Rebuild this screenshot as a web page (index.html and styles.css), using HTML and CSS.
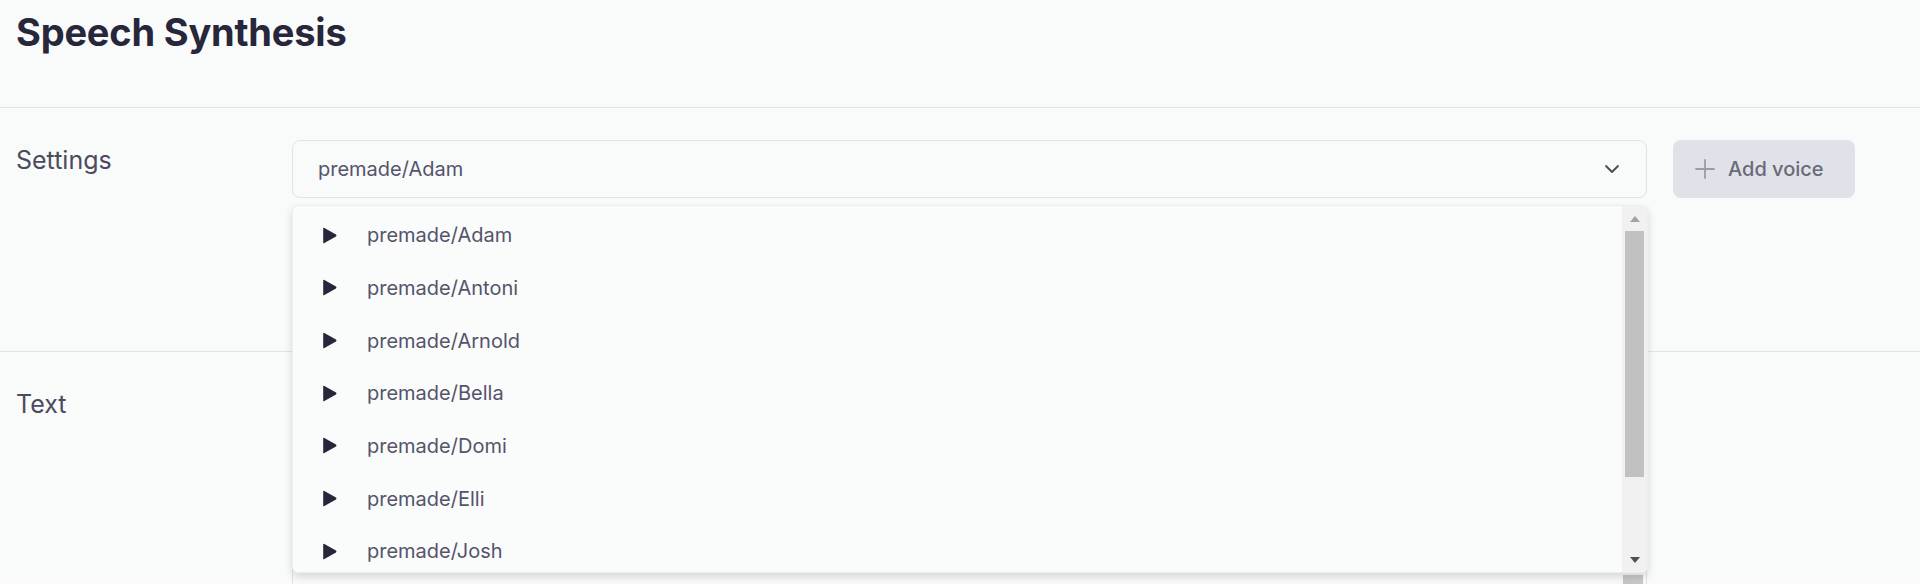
FILE: index.html
```html
<!DOCTYPE html>
<html lang="en">
<head>
<meta charset="utf-8">
<title>Speech Synthesis</title>
<link rel="stylesheet" href="styles.css">
</head>
<body>
  <header class="page-header">
    <h1 class="title">Speech Synthesis</h1>
  </header>

  <section class="row row-settings">
    <div class="label">Settings</div>
    <div class="controls">
      <div class="select-wrap">
        <div class="select">
          <span class="select-value">premade/Adam</span>
          <svg class="chevron" width="16" height="10" viewBox="0 0 16 10"><path d="M2 2 L8 8 L14 2" fill="none" stroke="#4a4a55" stroke-width="1.8" stroke-linecap="round" stroke-linejoin="round"/></svg>
        </div>
        <div class="dropdown">
          <ul class="options">
            <li class="option"><svg class="play" width="15" height="17" viewBox="0 0 15 17"><path d="M1.2 1.6 Q1.2 0.3 2.4 1 L14 7.6 Q15 8.5 14 9.4 L2.4 16 Q1.2 16.7 1.2 15.4 Z" fill="#27263b"/></svg><span>premade/Adam</span></li>
            <li class="option"><svg class="play" width="15" height="17" viewBox="0 0 15 17"><path d="M1.2 1.6 Q1.2 0.3 2.4 1 L14 7.6 Q15 8.5 14 9.4 L2.4 16 Q1.2 16.7 1.2 15.4 Z" fill="#27263b"/></svg><span>premade/Antoni</span></li>
            <li class="option"><svg class="play" width="15" height="17" viewBox="0 0 15 17"><path d="M1.2 1.6 Q1.2 0.3 2.4 1 L14 7.6 Q15 8.5 14 9.4 L2.4 16 Q1.2 16.7 1.2 15.4 Z" fill="#27263b"/></svg><span>premade/Arnold</span></li>
            <li class="option"><svg class="play" width="15" height="17" viewBox="0 0 15 17"><path d="M1.2 1.6 Q1.2 0.3 2.4 1 L14 7.6 Q15 8.5 14 9.4 L2.4 16 Q1.2 16.7 1.2 15.4 Z" fill="#27263b"/></svg><span>premade/Bella</span></li>
            <li class="option"><svg class="play" width="15" height="17" viewBox="0 0 15 17"><path d="M1.2 1.6 Q1.2 0.3 2.4 1 L14 7.6 Q15 8.5 14 9.4 L2.4 16 Q1.2 16.7 1.2 15.4 Z" fill="#27263b"/></svg><span>premade/Domi</span></li>
            <li class="option"><svg class="play" width="15" height="17" viewBox="0 0 15 17"><path d="M1.2 1.6 Q1.2 0.3 2.4 1 L14 7.6 Q15 8.5 14 9.4 L2.4 16 Q1.2 16.7 1.2 15.4 Z" fill="#27263b"/></svg><span>premade/Elli</span></li>
            <li class="option"><svg class="play" width="15" height="17" viewBox="0 0 15 17"><path d="M1.2 1.6 Q1.2 0.3 2.4 1 L14 7.6 Q15 8.5 14 9.4 L2.4 16 Q1.2 16.7 1.2 15.4 Z" fill="#27263b"/></svg><span>premade/Josh</span></li>
          </ul>
          <div class="scrollbar">
            <div class="sb-btn"><svg width="10" height="6" viewBox="0 0 10 6"><path d="M0 6 L5 0 L10 6 Z" fill="#a3a3a3"/></svg></div>
            <div class="sb-thumb"></div>
            <div class="sb-space"></div>
            <div class="sb-btn"><svg width="10" height="6" viewBox="0 0 10 6"><path d="M0 0 L10 0 L5 6 Z" fill="#505050"/></svg></div>
          </div>
        </div>
      </div>
      <button class="add-voice" type="button">
        <svg class="plus" width="20" height="20" viewBox="0 0 20 20"><path d="M10 1 V19 M1 10 H19" stroke="#9a9ca6" stroke-width="1.8" stroke-linecap="round"/></svg>
        <span>Add voice</span>
      </button>
    </div>
  </section>

  <section class="row row-text">
    <div class="label">Text</div>
    <div class="controls controls-text">
      <div class="textbox">
        <div class="textbox-scroll"></div>
      </div>
    </div>
  </section>
</body>
</html>
```

FILE: styles.css
```css
* { box-sizing: border-box; }

html, body {
  margin: 0;
  padding: 0;
  background: #f9fafa;
  font-family: Inter, "Noto Sans", "Liberation Sans", sans-serif;
  color: #27263b;
  overflow: hidden;
  height: 584px;
}

.page-header {
  height: 108px;
  padding: 9px 16px 0;
  border-bottom: 1px solid #e1e3e7;
}

.title {
  margin: 0;
  font-size: 38px;
  line-height: 46px;
  font-weight: 700;
  color: #27263b;
  letter-spacing: -0.2px;
}

.row {
  display: grid;
  grid-template-columns: 276px 1fr;
  padding: 32px 65px 0 16px;
}

.row-settings {
  height: 244px;
  border-bottom: 1px solid #e1e3e7;
}

.label {
  font-size: 25px;
  line-height: 36px;
  padding-top: 2px;
  color: #4c4b5e;
}

.controls {
  display: flex;
  gap: 26px;
  align-items: flex-start;
}

.controls-text {
  padding-right: 208px;
}

.select-wrap {
  position: relative;
  flex: 1;
}

.select {
  height: 58px;
  border: 1px solid #e1e3e8;
  border-radius: 8px;
  background: #f9fafa;
  display: flex;
  align-items: center;
  justify-content: space-between;
  padding: 0 26px 0 25px;
}

.select-value {
  font-size: 20px;
  color: #55546a;
}

.chevron { display: block; }

.dropdown {
  position: absolute;
  top: 65px;
  left: 0;
  right: -1px;
  height: 368px;
  background: #fafbfb;
  border: 1px solid #eceef0;
  border-radius: 6px;
  box-shadow: 0 4px 8px rgba(0, 0, 0, 0.14);
  display: flex;
  overflow: hidden;
  z-index: 5;
}

.options {
  flex: 1;
  list-style: none;
  margin: 0;
  padding: 3px 0 0;
  overflow: hidden;
}

.option {
  height: 52.67px;
  display: flex;
  align-items: center;
  padding-left: 29px;
  gap: 30px;
  font-size: 20px;
  color: #55546a;
}

.play { display: block; flex: none; }

.scrollbar {
  width: 25px;
  background: #f1f1f1;
  display: flex;
  flex-direction: column;
  align-items: center;
}

.sb-btn {
  height: 25px;
  width: 100%;
  display: flex;
  align-items: center;
  justify-content: center;
}

.sb-thumb {
  width: 19px;
  height: 246px;
  background: #c1c1c1;
}

.sb-space { flex: 1; }

.add-voice {
  width: 182px;
  height: 58px;
  border: none;
  border-radius: 8px;
  background: #dfe2e8;
  display: flex;
  align-items: center;
  gap: 13px;
  padding: 0 0 0 22px;
  font-family: inherit;
  font-size: 20px;
  font-weight: 500;
  color: #6a6a78;
}

.plus { display: block; flex: none; }

.row-text {
  padding-right: 65px;
}

.textbox {
  flex: 1;
  height: 260px;
  border: 1px solid #e1e3e8;
  border-radius: 8px;
  background: #f9fafa;
  display: flex;
  justify-content: flex-end;
  padding: 190px 3px 0 0;
}

.textbox-scroll {
  width: 20px;
  height: 40px;
  background: #c8c8c8;
}
```
